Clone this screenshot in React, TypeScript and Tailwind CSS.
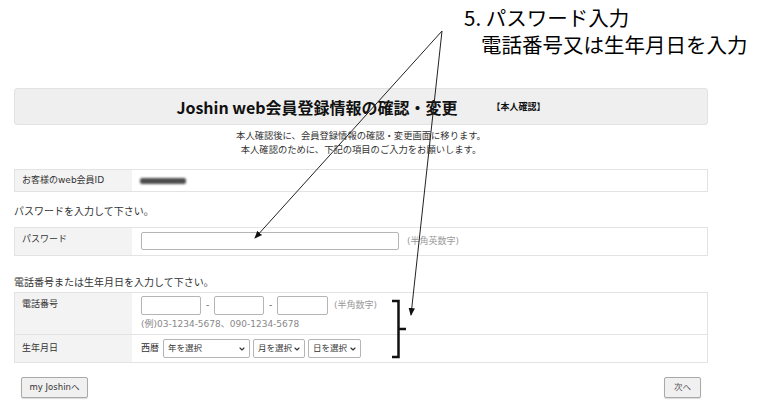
import { ChevronDown } from "lucide-react";

const jp = { fontFamily: '"DejaVu Sans", "Noto Sans CJK JP", sans-serif' };

function Select({ label, w }: { label: string; w: string }) {
  return (
    <div
      className={`${w} h-[19px] flex items-center justify-between pl-[4px] pr-[3px] border border-[#b5b5b5] rounded-[2px] bg-white text-[8.5px] text-[#333] whitespace-nowrap`}
    >
      <span>{label}</span>
      <ChevronDown size={8} strokeWidth={3.5} className="shrink-0 text-[#333]" />
    </div>
  );
}

function Overlay() {
  return (
    <svg
      className="absolute inset-0 pointer-events-none"
      width="768"
      height="412"
      viewBox="0 0 768 412"
    >
      <defs>
        <marker id="ah" markerWidth="8" markerHeight="8" refX="7" refY="4" orient="auto" markerUnits="userSpaceOnUse">
          <path d="M0,0.8 L8,4 L0,7.2 z" fill="#111" />
        </marker>
      </defs>
      <line x1="442" y1="31" x2="255" y2="238" stroke="#222" strokeWidth="1" markerEnd="url(#ah)" />
      <line x1="442" y1="31" x2="411" y2="315" stroke="#222" strokeWidth="1" markerEnd="url(#ah)" />
      <path d="M392,301 H398.5 V357 H392 M398.5,329 H406" fill="none" stroke="#111" strokeWidth="2.5" />
    </svg>
  );
}

export default function App() {
  return (
    <div className="relative w-[768px] h-[412px] bg-white overflow-hidden text-[#333]" style={jp}>
      {/* annotation */}
      <div
        className="pt-[4px] h-[88px] text-[20.5px] leading-[27px] text-black"
        style={{ fontFamily: '"Noto Sans CJK JP", sans-serif' }}
      >
        <div className="pl-[464px]">5. パスワード入力</div>
        <div className="pl-[481px]">電話番号又は生年月日を入力</div>
      </div>

      <div className="mx-[14px] w-[694px]">
        {/* title */}
        <div
          className="h-[37px] flex items-center justify-center gap-[34px] bg-[#efefef] border border-[#e2e2e2] rounded-[3px] text-[#111]"
          style={{ fontFamily: '"Noto Sans CJK JP", sans-serif' }}
        >
          <span className="text-[16px] font-bold">Joshin web会員登録情報の確認・変更</span>
          <span className="text-[9px] font-bold">【本人確認】</span>
        </div>

        <div className="mt-[3px] text-center text-[9.3px] leading-[14px] text-[#333]" style={{ fontFamily: '"Noto Sans CJK JP", sans-serif' }}>
          <p>本人確認後に、会員登録情報の確認・変更画面に移ります。</p>
          <p>本人確認のために、下記の項目のご入力をお願いします。</p>
        </div>

        {/* web id */}
        <div className="mt-[13px] h-[23px] flex border border-[#e3e3e3]">
          <div className="w-[117px] bg-[#f3f3f3] flex items-center pl-[7px] text-[9px]">お客様のweb会員ID</div>
          <div className="flex-1 flex items-center pl-[8px]">
            <div className="w-[46px] h-[6px] rounded-[2px] bg-[#3a3a3a] blur-[1px] opacity-90" />
          </div>
        </div>

        {/* password */}
        <p className="mt-[13px] text-[10px] leading-[14px] text-[#333]">パスワードを入力して下さい。</p>
        <div className="mt-[8px] h-[29px] flex border border-[#e3e3e3]">
          <div className="w-[117px] bg-[#f3f3f3] pl-[7px] pt-[5px] text-[9px] leading-[12px]">パスワード</div>
          <div className="flex-1 flex items-start pl-[9px] pt-[4px] gap-[8px]">
            <div className="w-[258px] h-[18px] border border-[#b5b5b5] rounded-[2px] bg-white" />
            <span className="text-[9px] leading-[18px] text-[#999]">(半角英数字)</span>
          </div>
        </div>

        {/* phone / birthday */}
        <p className="mt-[20px] text-[10px] leading-[14px] text-[#333]">電話番号または生年月日を入力して下さい。</p>
        <div className="mt-[2px] border border-[#e3e3e3]">
          <div className="h-[42px] flex border-b border-[#e3e3e3]">
            <div className="w-[117px] bg-[#f3f3f3] pl-[7px] pt-[5px] text-[9px] leading-[12px]">電話番号</div>
            <div className="flex-1 pl-[9px] pt-[3px]">
              <div className="flex items-center">
                <div className="w-[60px] h-[19px] border border-[#b5b5b5] rounded-[2px]" />
                <span className="w-[13px] text-center text-[9px] text-[#555]">-</span>
                <div className="w-[50px] h-[19px] border border-[#b5b5b5] rounded-[2px]" />
                <span className="w-[13px] text-center text-[9px] text-[#555]">-</span>
                <div className="w-[51px] h-[19px] border border-[#b5b5b5] rounded-[2px]" />
                <span className="ml-[6px] text-[9px] text-[#999]">(半角数字)</span>
              </div>
              <p className="mt-[3px] text-[9px] leading-[12px] text-[#888]">(例)03-1234-5678、090-1234-5678</p>
            </div>
          </div>
          <div className="h-[27px] flex">
            <div className="w-[117px] bg-[#f3f3f3] pl-[7px] pt-[7px] text-[9px] leading-[12px]">生年月日</div>
            <div className="flex-1 flex items-center pl-[9px] gap-[3px]">
              <span className="text-[9px] mr-[1px]">西暦</span>
              <Select label="年を選択" w="w-[87px]" />
              <Select label="月を選択" w="w-[52px]" />
              <Select label="日を選択" w="w-[53px]" />
            </div>
          </div>
        </div>

        {/* buttons */}
        <div className="mt-[14px] flex justify-between px-[7px]">
          <button className="w-[67px] h-[21px] bg-[#f0f0f0] border border-[#a9a9a9] rounded-[2px] text-[8.5px] text-[#333] shadow-[0_1px_1px_rgba(0,0,0,0.15)]">
            my Joshinへ
          </button>
          <button className="w-[37px] h-[21px] bg-[#f0f0f0] border border-[#a9a9a9] rounded-[2px] text-[8.5px] text-[#555] shadow-[0_1px_1px_rgba(0,0,0,0.15)]">
            次へ
          </button>
        </div>
      </div>

      <Overlay />
    </div>
  );
}
